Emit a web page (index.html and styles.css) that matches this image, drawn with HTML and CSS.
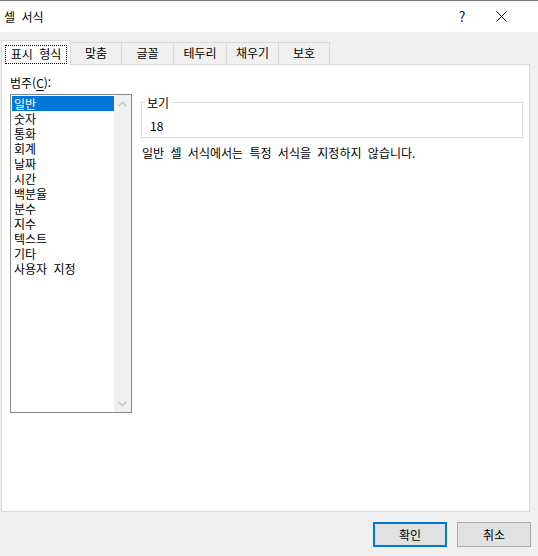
FILE: index.html
```html
<!DOCTYPE html>
<html lang="ko">
<head>
<meta charset="utf-8">
<title>셀 서식</title>
<link rel="stylesheet" href="styles.css">
</head>
<body>
<div class="dialog">
  <header class="titlebar">
    <span class="title">셀 서식</span>
    <span class="help">?</span>
    <span class="close"><svg width="11" height="11" viewBox="0 0 11 11"><path d="M0.5 0.5 L10.5 10.5 M10.5 0.5 L0.5 10.5" stroke="#000" stroke-width="1" fill="none"/></svg></span>
  </header>
  <nav class="tabs">
    <div class="tab active"><span class="focus">표시 형식</span></div>
    <div class="tab t2">맞춤</div>
    <div class="tab t3">글꼴</div>
    <div class="tab t4">테두리</div>
    <div class="tab t5">채우기</div>
    <div class="tab t6">보호</div>
  </nav>
  <section class="panel">
    <div class="left">
      <div class="label">범주(<u>C</u>):</div>
      <div class="listbox">
        <ul class="items">
          <li class="selected">일반</li>
          <li>숫자</li>
          <li>통화</li>
          <li>회계</li>
          <li>날짜</li>
          <li>시간</li>
          <li>백분율</li>
          <li>분수</li>
          <li>지수</li>
          <li>텍스트</li>
          <li>기타</li>
          <li>사용자 지정</li>
        </ul>
        <div class="scrollbar">
          <span class="arrow"><svg width="9" height="6" viewBox="0 0 9 6"><path d="M0.8 5 L4.5 1.3 L8.2 5" stroke="#c2c2c2" stroke-width="1.6" fill="none"/></svg></span>
          <span class="arrow"><svg width="9" height="6" viewBox="0 0 9 6"><path d="M0.8 1 L4.5 4.7 L8.2 1" stroke="#c2c2c2" stroke-width="1.6" fill="none"/></svg></span>
        </div>
      </div>
    </div>
    <div class="right">
      <fieldset class="sample">
        <legend>보기</legend>
        <div class="value">18</div>
      </fieldset>
      <p class="desc">일반 셀 서식에서는 특정 서식을 지정하지 않습니다.</p>
    </div>
  </section>
  <footer class="buttons">
    <button class="btn primary">확인</button>
    <button class="btn">취소</button>
  </footer>
</div>
</body>
</html>
```

FILE: styles.css
```css
html, body {
  margin: 0;
  padding: 0;
}
body {
  background: #f0f0f0;
  font-family: "Noto Sans CJK KR", "Noto Sans", sans-serif;
  font-size: 12px;
  line-height: 15px;
  word-spacing: 3px;
  color: #000;
}
.dialog {
  width: 538px;
  height: 556px;
  overflow: hidden;
}
.titlebar {
  box-sizing: border-box;
  height: 32px;
  border-top: 1px solid #7a7a7a;
  background: #fff;
  display: flex;
  align-items: center;
  padding-left: 4px;
}
.title {
  flex: 1;
}
.help {
  width: 12px;
  text-align: center;
  font-size: 14px;
  margin-right: 28px;
}
.close {
  width: 11px;
  height: 11px;
  margin-right: 31px;
  display: flex;
}
.tabs {
  display: flex;
  align-items: flex-end;
  margin-top: 8px;
  margin-bottom: -1px;
  padding-left: 1px;
  position: relative;
  z-index: 1;
}
.tab {
  box-sizing: border-box;
  height: 23px;
  border: 1px solid #d9d9d9;
  background: #f0f0f0;
  text-align: center;
  line-height: 20px;
  margin-left: -1px;
}
.tab.active {
  margin-left: 0;
  width: 70px;
  height: 25px;
  border-bottom: none;
  background: #fff;
  position: relative;
  z-index: 2;
  padding-top: 4px;
}
.focus {
  display: block;
  box-sizing: border-box;
  height: 19px;
  margin: 0 3px;
  border: 1px dotted #000;
  line-height: 16px;
}
.t2 { width: 52px; }
.t3 { width: 53px; }
.t4 { width: 54px; }
.t5 { width: 53px; }
.t6 { width: 52px; }
.panel {
  box-sizing: border-box;
  margin-left: 1px;
  width: 529px;
  height: 448px;
  border: 1px solid #d9d9d9;
  background: #fff;
  display: flex;
  padding: 10px 6px 10px 8px;
}
.left {
  width: 122px;
}
.label {
  margin-bottom: 4px;
}
.label u {
  text-underline-offset: 2px;
}
.listbox {
  box-sizing: border-box;
  width: 122px;
  height: 319px;
  border: 1px solid #828790;
  display: flex;
}
.items {
  list-style: none;
  margin: 0;
  padding: 1px 0 0 1px;
  flex: 1;
}
.items li {
  height: 15px;
  padding-left: 2px;
}
.items li.selected {
  background: #0078d7;
  color: #fff;
}
.scrollbar {
  width: 17px;
  background: #f0f0f0;
  display: flex;
  flex-direction: column;
  justify-content: space-between;
}
.arrow {
  height: 17px;
  display: flex;
  align-items: center;
  justify-content: center;
}
.right {
  width: 382px;
  margin-left: 9px;
  padding-top: 20px;
}
.sample {
  margin: 0;
  padding: 0 8px;
  border: 1px solid #dcdcdc;
  min-width: 0;
}
.sample legend {
  padding: 0 2px;
  margin-left: -5px;
  line-height: 15px;
}
.value {
  padding: 8px 0 4px;
}
.desc {
  margin: 7px 0 0;
  padding-left: 1px;
}
.buttons {
  display: flex;
  justify-content: flex-end;
  gap: 10px;
  padding-right: 7px;
  margin-top: 10px;
}
.btn {
  box-sizing: border-box;
  width: 74px;
  height: 25px;
  background: #e1e1e1;
  border: 1px solid #adadad;
  font-family: inherit;
  font-size: 12px;
  line-height: 15px;
  color: #000;
  padding: 0;
  margin: 0;
}
.btn.primary {
  border: 2px solid #0078d7;
}
```
